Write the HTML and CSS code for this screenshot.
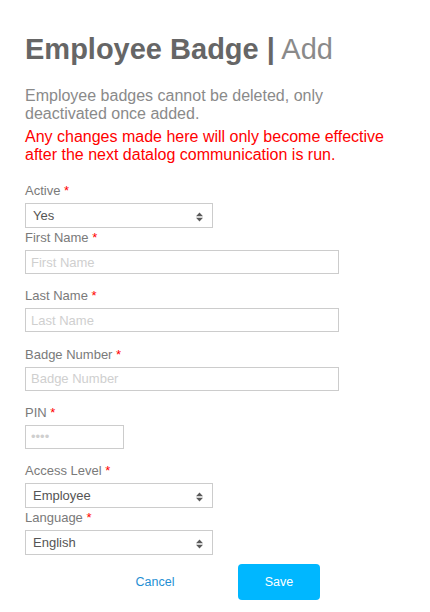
FILE: index.html
```html
<!DOCTYPE html>
<html lang="en">
<head>
<meta charset="utf-8">
<title>Employee Badge | Add</title>
<link rel="stylesheet" href="styles.css">
</head>
<body>
<div class="page">
  <h1 class="title"><span class="title-strong">Employee Badge |</span> <span class="title-sub">Add</span></h1>
  <p class="note">Employee badges cannot be deleted, only deactivated once added.</p>
  <p class="note warning">Any changes made here will only become effective after the next datalog communication is run.</p>

  <form class="form">
    <label class="label">Active <span class="req">*</span></label>
    <div class="select-wrap">
      <select class="select"><option>Yes</option><option>No</option></select>
      <svg class="arrows" viewBox="0 0 7 10" aria-hidden="true"><path d="M0 4.2 L3.5 0.5 L7 4.2 Z M0 5.8 L3.5 9.5 L7 5.8 Z"/></svg>
    </div>

    <label class="label">First Name <span class="req">*</span></label>
    <input class="input" type="text" placeholder="First Name">

    <label class="label">Last Name <span class="req">*</span></label>
    <input class="input" type="text" placeholder="Last Name">

    <label class="label">Badge Number <span class="req">*</span></label>
    <input class="input" type="text" placeholder="Badge Number">

    <label class="label">PIN <span class="req">*</span></label>
    <input class="input input-pin" type="password" placeholder="••••">

    <label class="label">Access Level <span class="req">*</span></label>
    <div class="select-wrap">
      <select class="select"><option>Employee</option></select>
      <svg class="arrows" viewBox="0 0 7 10" aria-hidden="true"><path d="M0 4.2 L3.5 0.5 L7 4.2 Z M0 5.8 L3.5 9.5 L7 5.8 Z"/></svg>
    </div>

    <label class="label">Language <span class="req">*</span></label>
    <div class="select-wrap">
      <select class="select"><option>English</option></select>
      <svg class="arrows" viewBox="0 0 7 10" aria-hidden="true"><path d="M0 4.2 L3.5 0.5 L7 4.2 Z M0 5.8 L3.5 9.5 L7 5.8 Z"/></svg>
    </div>

    <div class="actions">
      <button type="button" class="btn btn-cancel">Cancel</button>
      <button type="button" class="btn btn-save">Save</button>
    </div>
  </form>
</div>
</body>
</html>
```
FILE: styles.css
```css
html, body {
  margin: 0;
  padding: 0;
  background: #ffffff;
}

body {
  font-family: "Liberation Sans", Arial, Helvetica, sans-serif;
}

.page {
  padding: 31px 0 0 25px;
}

.title {
  margin: 0;
  font-size: 29px;
  line-height: 36px;
  font-weight: normal;
  color: #666666;
}

.title-strong {
  font-weight: bold;
}

.title-sub {
  color: #8a8a8a;
}

.note {
  margin: 20px 0 0;
  max-width: 375px;
  font-size: 16px;
  line-height: 18px;
  color: #8a8a8a;
}

.warning {
  margin-top: 5px;
  color: #ff0000;
}

.form {
  margin-top: 18px;
}

.label {
  display: block;
  font-size: 13px;
  line-height: 18px;
  color: #7a7a7a;
  margin-bottom: 3px;
}

.req {
  color: #ff0000;
}

.select-wrap {
  position: relative;
  width: 188px;
  margin-bottom: 1px;
}

.select {
  display: block;
  box-sizing: border-box;
  width: 188px;
  height: 25px;
  margin: 0;
  padding: 0 0 0 7px;
  border: 1px solid #cccccc;
  border-radius: 0;
  background: #ffffff;
  font-family: "Liberation Sans", Arial, Helvetica, sans-serif;
  font-size: 13px;
  color: #555555;
  -webkit-appearance: none;
  appearance: none;
  outline: none;
}

.arrows {
  position: absolute;
  right: 10px;
  top: 9px;
  width: 7px;
  height: 10px;
  fill: #5a5a5a;
  pointer-events: none;
}

.input {
  display: block;
  box-sizing: border-box;
  width: 314px;
  height: 24px;
  margin: 0 0 13.3px;
  padding: 0 5px;
  border: 1px solid #cccccc;
  border-radius: 0;
  font-family: "Liberation Sans", Arial, Helvetica, sans-serif;
  font-size: 13px;
  color: #555555;
  outline: none;
}

.input::placeholder {
  color: #cfcfcf;
  opacity: 1;
}

.input-pin {
  width: 99px;
}

.actions {
  display: flex;
  align-items: center;
  gap: 42px;
  margin-top: 9px;
  padding-left: 89px;
}

.btn {
  box-sizing: border-box;
  width: 82px;
  height: 36px;
  padding: 0;
  border: none;
  border-radius: 4px;
  font-family: "Liberation Sans", Arial, Helvetica, sans-serif;
  font-size: 12.5px;
  cursor: pointer;
}

.btn-cancel {
  background: transparent;
  color: #1f8fd3;
}

.btn-save {
  background: #00b7ff;
  color: #ffffff;
}
```
